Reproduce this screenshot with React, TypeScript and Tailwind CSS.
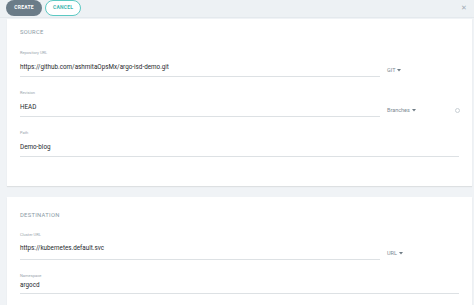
import React from "react";

function Field({
  label,
  value,
  width,
  mt,
  gap = "mt-[6px]",
  pb = "pb-[4px]",
  side,
}: {
  label: string;
  value: string;
  width: string;
  mt: string;
  gap?: string;
  pb?: string;
  side?: React.ReactNode;
}) {
  return (
    <div className={`flex items-end ${mt}`}>
      <div className={`${width} ${pb} border-b border-[#dde1e4]`}>
        <div className="h-[6px] leading-[6px] text-[4px] text-[#9aa5ad]">{label}</div>
        <div className={`${gap} h-[10px] leading-[10px] text-[6.3px] text-[#26292c]`}>{value}</div>
      </div>
      {side}
    </div>
  );
}

function Drop({ text }: { text: string }) {
  return (
    <div className="ml-[7px] mb-[3px] flex items-center gap-[2px] text-[5.5px] leading-[8px] text-[#7d8a93]">
      <span>{text}</span>
      <svg width="4" height="3" viewBox="0 0 4 3">
        <path d="M0 0 L4 0 L2 2.4 Z" fill="#6f7c85" />
      </svg>
    </div>
  );
}

export default function App() {
  return (
    <div
      className="w-[474px] h-[305px] overflow-hidden bg-[#f0f3f6] relative"
      style={{ fontFamily: "Roboto, 'Liberation Sans', sans-serif" }}
    >
      <div className="h-[18px] bg-[#edf1f4] flex items-start gap-[3px] px-[6px] border-b border-[#e4e9ed]">
        <button className="h-[16px] w-[36px] rounded-full bg-[#6b7c88] text-white text-[5px] font-bold tracking-[0.2px] flex items-center justify-center">
          CREATE
        </button>
        <button className="h-[16px] w-[36px] rounded-full bg-white border border-[#5cc9c3] text-[#3fb6b0] text-[5px] font-bold tracking-[0.2px] flex items-center justify-center">
          CANCEL
        </button>
        <div className="ml-auto mt-[3px] mr-[1px] text-[#a3adb4] text-[7px] leading-[10px]">✕</div>
      </div>
      <div className="pl-[7px] pr-[2px] pt-[1px]">
        <div className="bg-white h-[167px] px-[13px] pt-[9px] shadow-[0_1px_1px_rgba(0,0,0,0.08)]">
          <div className="h-[8px] leading-[8px] text-[5.8px] text-[#8a9aa5] tracking-[0.3px]">SOURCE</div>
          <Field
            label="Repository URL"
            value="https://github.com/ashmitaOpsMx/argo-isd-demo.git"
            width="w-[360px]"
            mt="mt-[14px]"
            side={<Drop text="GIT" />}
          />
          <Field
            label="Revision"
            value="HEAD"
            width="w-[360px]"
            mt="mt-[13px]"
            side={
              <>
                <Drop text="Branches" />
                <div className="ml-auto mr-[-1px] mb-[4px] w-[5px] h-[5px] rounded-full border border-[#c9d0d5]" />
              </>
            }
          />
          <Field label="Path" value="Demo-blog" width="w-[440px]" mt="mt-[13px]" />
        </div>
        <div className="bg-white h-[120px] mt-[11px] px-[13px] pt-[14px] shadow-[0_1px_1px_rgba(0,0,0,0.08)]">
          <div className="h-[8px] leading-[8px] text-[5.8px] text-[#8a9aa5] tracking-[0.3px]">DESTINATION</div>
          <Field
            label="Cluster URL"
            value="https://kubernetes.default.svc"
            width="w-[360px]"
            mt="mt-[13px]"
            gap="mt-[5px]"
            pb="pb-[6px]"
            side={<Drop text="URL" />}
          />
          <Field
            label="Namespace"
            value="argocd"
            width="w-[440px]"
            mt="mt-[13px]"
            gap="mt-[1px]"
            pb="pb-[3px]"
          />
        </div>
      </div>
    </div>
  );
}
